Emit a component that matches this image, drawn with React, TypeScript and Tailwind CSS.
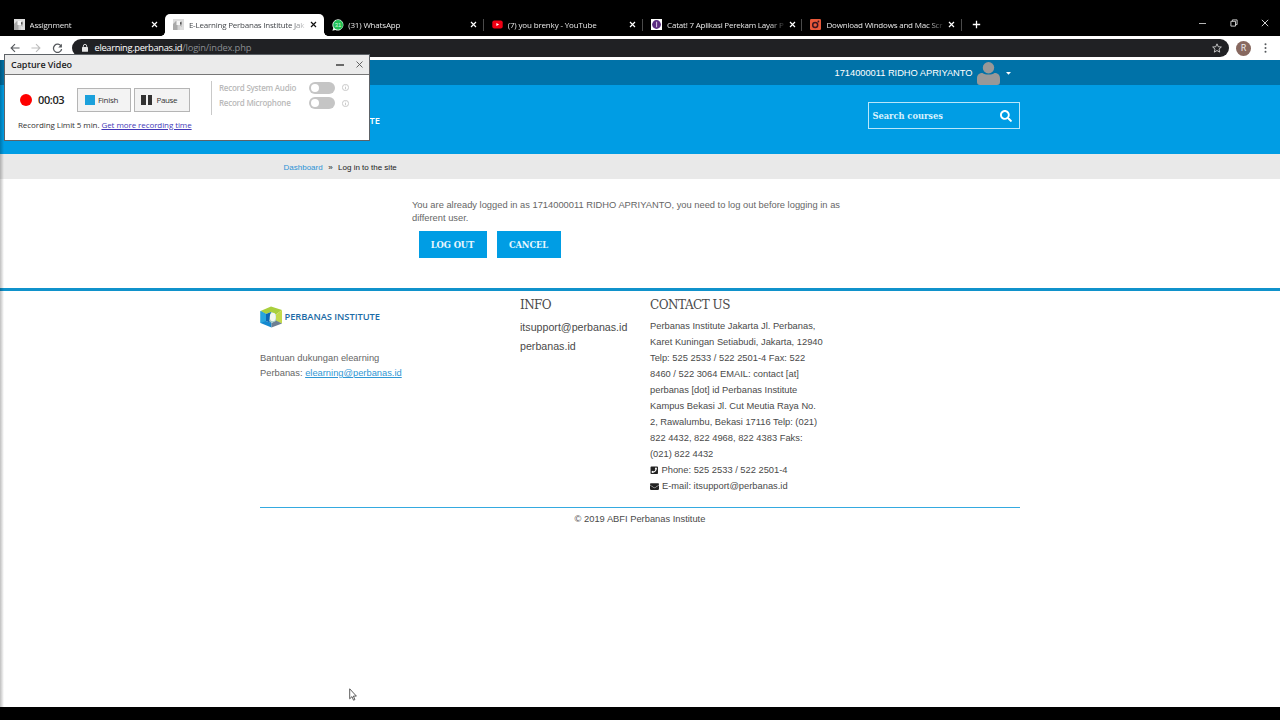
import type { ReactNode } from 'react';
import { FaSearch, FaPhoneSquare, FaEnvelope } from 'react-icons/fa';

interface Tab {
  title: string;
  icon: ReactNode;
  active?: boolean;
  tracking: string;
}

const MoodleIcon = () => (
  <svg width="11" height="11" viewBox="0 0 11 11">
    <rect width="11" height="11" fill="#dedede" />
    <path d="M0 11V5l3-3h4l1.500 2v4L7 6.500 5 7v4z" fill="#a9a9a9" />
    <path d="M3.500 2h4v4h-4z" fill="#f5f5f5" />
    <path d="M4.500 6H7v5H4.500z" fill="#d2d2d2" />
    <path d="M7 3.500l1.500-1v3H7z" fill="#555" />
  </svg>
);

const WhatsAppIcon = () => (
  <svg width="12" height="12" viewBox="0 0 12 12">
    <path d="M6 .3a5.6 5.6 0 1 1-2.7 10.6L.4 11.7l.9-2.8A5.6 5.6 0 0 1 6 .3z" fill="#e9f9ee" />
    <circle cx="6.1" cy="5.9" r="4.9" fill="#1fbf55" />
    <text x="6.1" y="8.2" textAnchor="middle" fontSize="6" fontFamily="Liberation Sans, sans-serif" fill="#d5f7df">31</text>
  </svg>
);

const YouTubeIcon = () => (
  <svg width="11" height="11" viewBox="0 0 11 11">
    <rect x="0.3" y="1.5" width="10.4" height="8" rx="2" fill="#f00014" />
    <path d="M4.4 3.9v3.2l2.7-1.6z" fill="#fff" />
  </svg>
);

const CatatIcon = () => (
  <svg width="11" height="11" viewBox="0 0 11 11">
    <rect width="11" height="11" fill="#fff" />
    <circle cx="5.5" cy="5.5" r="4.4" fill="#5c2d82" />
    <path d="M5.1 2.7h1v5.6h-1z" fill="#d9c6e6" />
  </svg>
);

const RecorderIcon = () => (
  <svg width="11" height="11" viewBox="0 0 11 11">
    <rect width="11" height="11" rx="1.2" fill="#e8583a" />
    <circle cx="5.2" cy="6" r="2.5" fill="none" stroke="#3a1520" strokeWidth="1.5" />
    <circle cx="8.4" cy="2.5" r="0.9" fill="#3a1520" />
  </svg>
);

const tabs: Tab[] = [
  { title: 'Assignment', icon: <MoodleIcon />, tracking: 'tracking-[-0.16px]' },
  { title: 'E-Learning Perbanas Institute Jak', icon: <MoodleIcon />, active: true, tracking: 'tracking-[-0.22px]' },
  { title: '(31) WhatsApp', icon: <WhatsAppIcon />, tracking: 'tracking-[-0.17px]' },
  { title: '(7) you brenky - YouTube', icon: <YouTubeIcon />, tracking: 'tracking-[-0.15px]' },
  { title: 'Catat! 7 Aplikasi Perekam Layar P', icon: <CatatIcon />, tracking: 'tracking-[-0.21px]' },
  { title: 'Download Windows and Mac Scr', icon: <RecorderIcon />, tracking: 'tracking-[-0.2px]' },
];

const contactLines = [
  'Perbanas Institute Jakarta Jl. Perbanas,',
  'Karet Kuningan Setiabudi, Jakarta, 12940',
  'Telp: 525 2533 / 522 2501-4 Fax: 522',
  '8460 / 522 3064 EMAIL: contact [at]',
  'perbanas [dot] id Perbanas Institute',
  'Kampus Bekasi Jl. Cut Meutia Raya No.',
  '2, Rawalumbu, Bekasi 17116 Telp: (021)',
  '822 4432, 822 4968, 822 4383 Faks:',
  '(021) 822 4432',
];

function BrowserTab({ tab, divider }: { tab: Tab; divider: boolean }) {
  return (
    <div
      className={`relative flex h-[22px] w-[159.4px] shrink-0 items-center pl-2 ${
        tab.active ? 'rounded-t-[5px] bg-white text-[#45484c]' : 'text-[#e8e8e8]'
      }`}
    >
      {tab.active && (
        <>
          <span className="absolute bottom-0 -left-1 size-1 bg-[radial-gradient(circle_at_0_0,transparent_3.5px,white_4px)]" />
          <span className="absolute -right-1 bottom-0 size-1 bg-[radial-gradient(circle_at_100%_0,transparent_3.5px,white_4px)]" />
        </>
      )}
      <span className="flex w-4 shrink-0">{tab.icon}</span>
      <span
        className={`w-[118px] text-[8px] leading-3 whitespace-nowrap [mask-image:linear-gradient(to_right,black_102px,rgba(0,0,0,0.15)_117px)] ${tab.tracking}`}
      >
        {tab.title}
      </span>
      <svg width="7" height="7" viewBox="0 0 7 7" className="ml-[3.5px] shrink-0">
        <path d="M1 1l5 5M6 1L1 6" stroke={tab.active ? '#111' : '#fff'} strokeWidth="1.2" />
      </svg>
      {divider && <span className="absolute top-[5px] right-0 h-3 w-px bg-[#4a4a4a]" />}
    </div>
  );
}

function TabStrip() {
  return (
    <div className="flex h-9 items-start bg-black pt-[13.5px] pl-[5.500px]">
      {tabs.map((tab, i) => (
        <BrowserTab key={tab.title} tab={tab} divider={i > 1} />
      ))}
      <svg width="9" height="9" viewBox="0 0 9 9" className="mt-[6.500px] ml-[10.5px]">
        <path d="M4.5 .8v7.4M.8 4.5h7.4" stroke="#fff" strokeWidth="1.3" />
      </svg>
      <div className="mt-[5px] mr-[11px] ml-auto flex items-center gap-[23.500px]">
        <svg width="7" height="8" viewBox="0 0 7 8">
          <path d="M0 4.500h7" stroke="#b5b5b5" />
        </svg>
        <svg width="8" height="8" viewBox="0 0 8 8" fill="none" stroke="#ddd" strokeWidth=".9">
          <path d="M.9 2.3h4.6v4.8H.9zM2.4 2.3V.9h4.7v4.7H5.5" />
        </svg>
        <svg width="8" height="8" viewBox="0 0 8 8">
          <path d="M.8 .8l6.4 6.4M7.2 .8L.8 7.2" stroke="#e6e6e6" strokeWidth=".9" />
        </svg>
      </div>
    </div>
  );
}

function Toolbar() {
  return (
    <div className="flex h-6 items-center bg-white pl-[9.500px]">
      <svg width="10" height="10" viewBox="0 0 11 11" fill="none" stroke="#55585c" strokeWidth="1.2" className="shrink-0">
        <path d="M10.500 5.5H1.5M5.5 1.2L1.2 5.5l4.3 4.3" />
      </svg>
      <svg width="10" height="10" viewBox="0 0 11 11" fill="none" stroke="#bdbdbd" strokeWidth="1.2" className="ml-[11.500px] shrink-0">
        <path d="M.5 5.5h9M5.5 1.2l4.3 4.3-4.3 4.3" />
      </svg>
      <svg width="11" height="11" viewBox="0 0 12 12" fill="none" stroke="#55585c" strokeWidth="1.4" className="ml-[11px] shrink-0">
        <path d="M10 3.6A4.5 4.5 0 1 0 10.5 6.6" />
        <path d="M10.8 .8v4H6.8z" fill="#55585c" stroke="none" />
      </svg>
      <div className="ml-[9px] flex h-[18px] w-[1157px] items-center rounded-full bg-[#202124] pr-[7px] pl-[9.500px] text-[9.33px] whitespace-nowrap">
        <svg width="6" height="8" viewBox="0 0 6 8" className="shrink-0">
          <rect y="3" width="6" height="4.8" rx=".6" fill="#e6e6e6" />
          <path d="M1.3 3.2V2.1a1.7 1.7 0 0 1 3.4 0v1.1" fill="none" stroke="#e6e6e6" strokeWidth=".9" />
        </svg>
        <span className="ml-[7px] tracking-[-0.33px] text-white">elearning.perbanas.id</span>
        <span className="tracking-[-0.15px] text-[#8b8e92]">/login/index.php</span>
        <svg width="10" height="10" viewBox="0 0 24 24" fill="none" stroke="#dedede" strokeWidth="2" className="ml-auto">
          <path d="M12 2l3 7 7.500.6-5.700 5 1.700 7.400L12 18l-6.500 4 1.700-7.400-5.700-5L9 9z" />
        </svg>
      </div>
      <span className="ml-[7px] flex size-[15px] items-center justify-center rounded-full bg-[#87685f] text-[9px] text-[#eee]">R</span>
      <svg width="3" height="10" viewBox="0 0 3 10" className="ml-[12.500px]" fill="#55585c">
        <circle cx="1.5" cy="1.300" r="1" />
        <circle cx="1.5" cy="5" r="1" />
        <circle cx="1.5" cy="8.700" r="1" />
      </svg>
    </div>
  );
}

function Logo({ light }: { light?: boolean }) {
  return (
    <div className="flex items-center">
      <svg width="23" height="22" viewBox="0 0 23 22">
        <path d="M.5 5L11 .5 22 4l-6 4.500-5-2.500-5 2z" fill="#a9cf3d" />
        <path d="M.5 5L6 8v7l5.500 2v4.500L.5 17z" fill="#1489cf" />
        <path d="M.5 5L6 8v7l-5.500 2z" fill="#28a5dc" />
        <path d="M22 4l-6 4.500v6.500l6 2.500z" fill="#c3d94a" />
        <path d="M11.500 21.500L22 17.500 16 14.500l-4.500 2.500z" fill="#6d7f92" />
        <path d="M6 8l5-2v11l-5-2z" fill="#0e67b2" />
        <path d="M11 6l5 2.500V15l-4.500 2L9 15z" fill="#9cc9c4" />
        <ellipse cx="12.800" cy="11" rx="3" ry="4.300" fill="#f4f8ef" />
      </svg>
      <span
        className={`ml-[1.500px] font-['Open_Sans',sans-serif] text-[9.33px] leading-3 font-semibold tracking-[-0.05px] whitespace-nowrap ${
          light ? 'text-white' : 'text-[#1c6ba6]'
        }`}
      >
        PERBANAS INSTITUTE
      </span>
    </div>
  );
}

function SiteHeader() {
  return (
    <header>
      <div className="h-[25px] bg-[#0072a8]">
        <div className="mx-auto flex h-full w-[760px] items-center justify-end pr-[9px] text-[9.33px] text-white">
          <span className="pt-[2px] tracking-[-0.04px]">1714000011 RIDHO APRIYANTO</span>
          <svg width="23" height="23" viewBox="0 0 23 23" className="mt-[2px] ml-1" fill="#989898">
            <circle cx="11.500" cy="5.800" r="5.700" />
            <path d="M0 20v-3.500C0 12.500 2.500 11 5.500 11c1.500 1 3.500 1.500 6 1.500s4.500-.5 6-1.500c3 0 5.500 1.500 5.500 5.500V20c0 2-1 3-3 3H3c-2 0-3-1-3-3z" />
          </svg>
          <svg width="5" height="3" viewBox="0 0 5 3" className="mt-[2px] ml-[6.500px]" fill="#fff">
            <path d="M0 0h5L2.500 2.700z" />
          </svg>
        </div>
      </div>
      <div className="h-[69px] bg-[#009de4]">
        <div className="mx-auto flex w-[760px] items-start justify-between">
          <div className="pt-[25px]">
            <Logo light />
          </div>
          <div className="mt-[17px] flex h-[27px] w-[152px] items-center justify-between border border-[#b9e6fa] pr-[7px] pl-[3.500px] text-white">
            <span className="font-['DejaVu_Serif_Condensed','DejaVu_Serif',serif] text-[9.200px] font-bold text-[#d9f2fd] [font-stretch:condensed]">
              Search courses
            </span>
            <FaSearch size={12} />
          </div>
        </div>
      </div>
    </header>
  );
}

function Footer() {
  return (
    <footer className="border-t-[3px] border-t-[#1092cb] text-[9.33px] text-[#4a4a4a]">
      <div className="mx-auto grid h-[217px] w-[760px] grid-cols-[260px_130px_175px] border-b border-b-[#35aae0]">
        <div className="pt-[15px]">
          <Logo />
          <p className="mt-[23px] leading-[15px] text-[#666]">
            Bantuan dukungan elearning
            <br />
            Perbanas: <a className="text-[#2f97d4] underline">elearning@perbanas.id</a>
          </p>
        </div>
        <div className="pt-[6px]">
          <h4 className="font-['DejaVu_Serif',serif] text-[12px] leading-4 tracking-[-0.6px]">INFO</h4>
          <ul className="mt-[5px] text-[10.67px] leading-[18.500px]">
            <li>itsupport@perbanas.id</li>
            <li>perbanas.id</li>
          </ul>
        </div>
        <div className="pt-[6px] whitespace-nowrap">
          <h4 className="font-['DejaVu_Serif',serif] text-[12px] leading-4 tracking-[-0.49px]">CONTACT US</h4>
          <div className="mt-[5px] leading-4">
            {contactLines.map((line) => (
              <p key={line}>{line}</p>
            ))}
            <p className="flex items-center gap-[3px]">
              <FaPhoneSquare size={8.5} color="#222" />
              Phone: 525 2533 / 522 2501-4
            </p>
            <p className="flex items-center gap-[3px]">
              <FaEnvelope size={9} color="#222" />
              E-mail: itsupport@perbanas.id
            </p>
          </div>
        </div>
      </div>
      <p className="pt-[3px] text-center leading-4">© 2019 ABFI Perbanas Institute</p>
    </footer>
  );
}

function RecordOption({ label }: { label: string }) {
  return (
    <div className="flex h-[15.500px] items-center">
      <span className="w-[90px] font-semibold tracking-[-0.24px]">{label}</span>
      <span className="flex h-3 w-[26px] items-center rounded-full bg-[#c5c5c5] pl-[2px]">
        <span className="size-2 rounded-full bg-white" />
      </span>
      <svg width="7" height="7" viewBox="0 0 7 7" className="ml-[7px]" fill="none" stroke="#b5b5b5" strokeWidth=".7">
        <circle cx="3.500" cy="3.500" r="3.100" />
        <path d="M3.500 3v2.300M3.500 1.600v.7" />
      </svg>
    </div>
  );
}

// Floating recorder window, sits above the browser
function CaptureWindow() {
  return (
    <div className="absolute top-[54px] left-1 h-[87px] w-[366px] border border-[#5d6267] bg-white font-['Open_Sans',sans-serif] text-[8px] leading-3 whitespace-nowrap text-[#333]">
      <div className="flex h-[20px] items-center border-b border-[#777] bg-[#ebebeb] pr-[6px] pl-[6px]">
        <span className="text-[9px] font-semibold tracking-[-0.05px] text-[#222]">Capture Video</span>
        <svg width="8" height="8" viewBox="0 0 8 8" className="ml-auto">
          <path d="M0 4h8" stroke="#222" strokeWidth="1.300" />
        </svg>
        <svg width="7" height="7" viewBox="0 0 7 7" className="ml-[12px]">
          <path d="M.5 .5l6 6M6.500 .5l-6 6" stroke="#555" strokeWidth=".9" />
        </svg>
      </div>
      <div className="flex h-[40px]">
        <div className="flex w-[206px] items-start pt-[13px] pl-[15px]">
          <span className="mt-[6px] size-[11.500px] rounded-full bg-[#ff0000]" />
          <span className="mt-[6px] ml-[6.500px] w-[39px] text-[11px] font-semibold tracking-[-0.4px] text-[#222]">00:03</span>
          <button className="flex h-[24px] w-[54px] items-center border border-[#b5b5b5] bg-[#f3f3f3] pl-[7px]">
            <span className="size-[10px] bg-[#1ba1dc]" />
            <span className="ml-[3px] tracking-[-0.29px]">Finish</span>
          </button>
          <button className="ml-[3px] flex h-[24px] w-[56px] shrink-0 items-center border border-[#b5b5b5] bg-[#f3f3f3] pl-[6px]">
            <span className="h-[10px] w-[4.500px] bg-[#333]" />
            <span className="ml-[2px] h-[10px] w-[4.500px] bg-[#333]" />
            <span className="ml-[4.500px] tracking-[-0.36px]">Pause</span>
          </button>
        </div>
        <div className="mt-[6px] h-[34px] border-l border-[#c9c9c9] pl-[7px] text-[#b9b9b9]">
          <div className="-mt-[1px]">
            <RecordOption label="Record System Audio" />
            <RecordOption label="Record Microphone" />
          </div>
        </div>
      </div>
      <p className="mt-[4px] pl-[13px] tracking-[-0.08px]">
        Recording Limit 5 min. <a className="text-[#4338b8] underline">Get more recording time</a>
      </p>
    </div>
  );
}

export default function App() {
  return (
    <div className="relative flex h-[720px] w-[1280px] flex-col overflow-hidden bg-white font-['Liberation_Sans',Arial,sans-serif]">
      <div className="shrink-0 font-['Open_Sans',sans-serif]">
        <TabStrip />
        <Toolbar />
      </div>
      <SiteHeader />
      <nav className="h-[25px] shrink-0 bg-[#e9e9e9]">
        <div className="mx-auto flex h-full w-[760px] items-center pt-[2px] pl-[23.500px] text-[8px] text-[#222]">
          <a className="text-[#2b93d6]">Dashboard</a>
          <span className="mx-[5.500px]">»</span>
          <span>Log in to the site</span>
        </div>
      </nav>
      <main className="h-[109px] shrink-0 pt-[20px] pl-[412px]">
        <p className="w-[436px] text-[9.33px] leading-[13.330px] text-[#666]">
          You are already logged in as 1714000011 RIDHO APRIYANTO, you need to log out before logging in as different user.
        </p>
        <div className="mt-[5.500px] ml-[6.500px] flex gap-[10px] font-['DejaVu_Serif_Condensed','DejaVu_Serif',serif] text-[9.33px] font-bold text-[#e8f7fe] [font-stretch:condensed]">
          <button className="h-[27px] w-[68px] bg-[#009de4] pt-px tracking-[-0.1px]">LOG OUT</button>
          <button className="h-[27px] w-[64px] bg-[#009de4] pt-px tracking-[-0.1px]">CANCEL</button>
        </div>
      </main>
      <Footer />
      <div className="mt-auto h-[13px] bg-black" />

      <div className="absolute top-[60px] left-0 h-[647px] w-1 bg-linear-to-r from-black/25 to-transparent" />
      <CaptureWindow />
      <svg width="8" height="13" viewBox="0 0 8 13" className="absolute top-[688px] left-[349px]">
        <path d="M.7 .8v10l2.300-2.200 1.500 3.600 1.400-.6-1.500-3.500h3z" fill="#fff" stroke="#333" strokeWidth=".8" />
      </svg>
    </div>
  );
}
